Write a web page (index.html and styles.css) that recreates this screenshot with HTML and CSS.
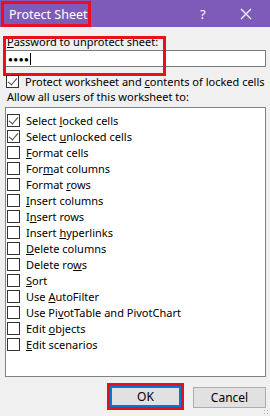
FILE: index.html
```html
<!DOCTYPE html>
<html lang="en">
<head>
    <meta charset="UTF-8">
    <meta name="viewport" content="width=device-width, initial-scale=1.0">
    <title>Protect Sheet</title>
    <link rel="stylesheet" href="styles.css">
</head>
<body>
    <div class="dialog">
        <div class="titlebar">
            <span class="title marked">Protect Sheet</span>
            <span class="help">?</span>
            <svg class="close" width="12" height="12" viewBox="0 0 12 12">
                <path d="M1 1 L11 11 M11 1 L1 11" stroke="#fff" stroke-width="1.2" fill="none"/>
            </svg>
        </div>

        <div class="body">
            <div class="password-mark"></div>
            <label class="field-label" for="pwd"><u>P</u>assword to unprotect sheet:</label>
            <div class="input" id="pwd"><span class="dots">●●●●</span><span class="caret"></span></div>

            <div class="check-row top-check">
                <span class="box checked"></span>
                <span>Protect worksheet and <u>c</u>ontents of locked cells</span>
            </div>

            <div class="field-label allow">Allow all users of this worksheet to:</div>

            <div class="list">
                <div class="check-row"><span class="box checked"></span><span>Select <u>l</u>ocked cells</span></div>
                <div class="check-row"><span class="box checked"></span><span>Select <u>u</u>nlocked cells</span></div>
                <div class="check-row"><span class="box"></span><span><u>F</u>ormat cells</span></div>
                <div class="check-row"><span class="box"></span><span>For<u>m</u>at columns</span></div>
                <div class="check-row"><span class="box"></span><span>Format <u>r</u>ows</span></div>
                <div class="check-row"><span class="box"></span><span><u>I</u>nsert columns</span></div>
                <div class="check-row"><span class="box"></span><span>I<u>n</u>sert rows</span></div>
                <div class="check-row"><span class="box"></span><span>Insert <u>h</u>yperlinks</span></div>
                <div class="check-row"><span class="box"></span><span><u>D</u>elete columns</span></div>
                <div class="check-row"><span class="box"></span><span>Delete ro<u>w</u>s</span></div>
                <div class="check-row"><span class="box"></span><span><u>S</u>ort</span></div>
                <div class="check-row"><span class="box"></span><span>Use <u>A</u>utoFilter</span></div>
                <div class="check-row"><span class="box"></span><span>Use Pi<u>v</u>otTable and PivotChart</span></div>
                <div class="check-row"><span class="box"></span><span>Edit <u>o</u>bjects</span></div>
                <div class="check-row"><span class="box"></span><span><u>E</u>dit scenarios</span></div>
            </div>

            <div class="buttons">
                <button class="btn ok">OK</button>
                <button class="btn cancel">Cancel</button>
            </div>
        </div>
        <div class="grip"></div>
    </div>
</body>
</html>
```

FILE: styles.css
```css
body {
    margin: 0;
    padding: 0;
    background-color: #f0f0f0;
    font-family: "Noto Sans", "Open Sans", sans-serif;
    font-size: 11px;
    color: #000;
}
.dialog {
    position: relative;
    width: 270px;
    height: 416px;
    overflow: hidden;
}
.titlebar {
    height: 27px;
    background-color: #7f5bb9;
    color: #fff;
    display: flex;
    align-items: center;
    font-size: 12.5px;
}
.title {
    box-sizing: border-box;
    height: 26px;
    width: 90px;
    margin: 1px 0 0 1px;
    padding-left: 5px;
    display: flex;
    align-items: center;
    white-space: nowrap;
}
.marked {
    border: 3px solid #e8101a;
}
.help {
    margin-left: 109px;
    font-size: 13px;
}
.close {
    margin-left: 34px;
}
.body {
    position: relative;
    padding: 0 4px 0 5px;
}
.password-mark {
    position: absolute;
    left: 3px;
    top: 3px;
    width: 157px;
    height: 34px;
    border: 3px solid #e8101a;
}
.field-label {
    display: block;
    padding-left: 2px;
    height: 17px;
    line-height: 17px;
    margin-top: 6px;
}
.input {
    box-sizing: border-box;
    height: 17px;
    margin-top: 0;
    background: #fff;
    border: 1px solid #7a7a7a;
    display: flex;
    align-items: center;
    padding-left: 2px;
}
.dots {
    font-size: 8px;
    letter-spacing: 0.5px;
}
.caret {
    width: 1px;
    height: 12px;
    background: #000;
    margin-left: 1px;
}
.check-row {
    display: flex;
    align-items: center;
    height: 16px;
    white-space: nowrap;
}
.top-check {
    margin-top: 6px;
    padding-left: 1px;
}
.box {
    box-sizing: border-box;
    flex: none;
    width: 13px;
    height: 13px;
    border: 1px solid #333;
    background: #fff;
    margin-right: 6px;
    position: relative;
}
.checked::after {
    content: "";
    position: absolute;
    left: 3px;
    top: 0px;
    width: 4px;
    height: 8px;
    border-right: 1.1px solid #444;
    border-bottom: 1.1px solid #444;
    transform: rotate(40deg);
}
.allow {
    margin-top: 0;
    height: 16px;
    line-height: 16px;
}
.list {
    box-sizing: border-box;
    height: 270px;
    margin-top: 2px;
    background: #fff;
    border: 1px solid #828282;
    padding: 4px 0 0 1px;
}
.buttons {
    display: flex;
    margin-top: 9px;
    padding-left: 105px;
}
.btn {
    box-sizing: border-box;
    height: 21px;
    font-family: inherit;
    font-size: 12px;
    background: #e1e1e1;
    border: 1px solid #adadad;
    color: #000;
    padding: 0;
}
.ok {
    width: 71px;
    border: 2px solid #0078d7;
    outline: 3px solid #e8101a;
    outline-offset: 0;
}
.cancel {
    width: 73px;
    margin-left: 12px;
    margin-top: 1px;
}
.grip {
    position: absolute;
    right: 1px;
    bottom: 1px;
    width: 6px;
    height: 6px;
    background:
        radial-gradient(circle, #b0b0b0 0.8px, transparent 1px) 0 0 / 3px 3px;
}
```
